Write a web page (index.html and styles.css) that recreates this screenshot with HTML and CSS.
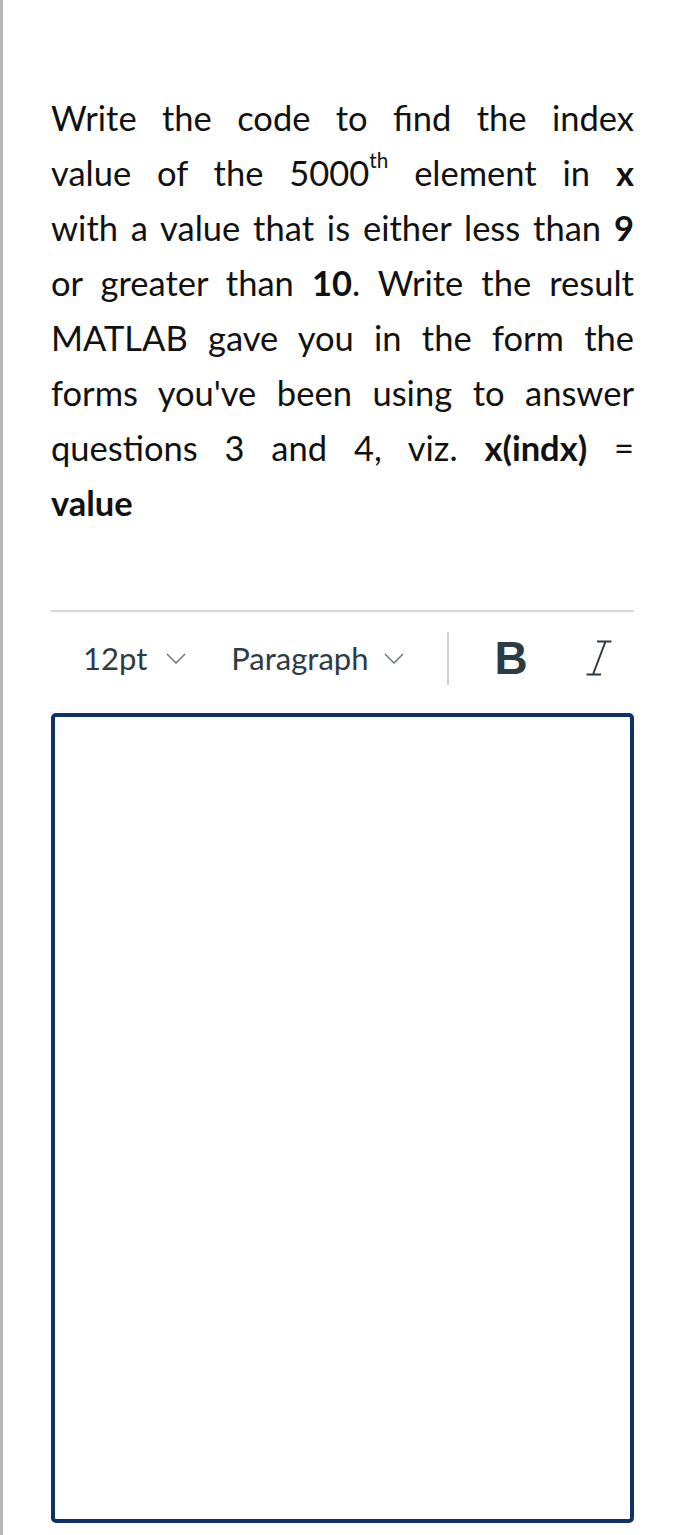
FILE: index.html
```html
<!DOCTYPE html>
<html lang="en">
<head>
<meta charset="utf-8">
<title>Question</title>
<link rel="stylesheet" href="styles.css">
</head>
<body>
<div class="page">
  <p class="question">
    <span class="line">Write the code to find the index</span>
    <span class="line">value of the 5000<sup>th</sup> element in <b>x</b></span>
    <span class="line">with a value that is either less than <b>9</b></span>
    <span class="line">or greater than <b>10</b>. Write the result</span>
    <span class="line">MATLAB gave you in the form the</span>
    <span class="line">forms you've been using to answer</span>
    <span class="line">questions 3 and 4, viz. <b>x(indx)</b> =</span>
    <span class="line last"><b>value</b></span>
  </p>
  <div class="divider"></div>
  <div class="toolbar">
    <div class="menu size">
      <span>12pt</span>
      <svg class="chev" width="20" height="11" viewBox="0 0 20 11"><polyline points="1,1 10,10 19,1" fill="none" stroke="#5f6a72" stroke-width="1.3"/></svg>
    </div>
    <div class="menu block">
      <span>Paragraph</span>
      <svg class="chev" width="20" height="11" viewBox="0 0 20 11"><polyline points="1,1 10,10 19,1" fill="none" stroke="#5f6a72" stroke-width="1.3"/></svg>
    </div>
    <div class="sep"></div>
    <span class="btn bold">B</span>
    <svg class="btn italic" width="28" height="36" viewBox="0 0 28 36"><path d="M12 1.5H26.5M1.5 34.5H16M20.5 1.5L8 34.5" fill="none" stroke="#2d3b45" stroke-width="2"/></svg>
  </div>
  <div class="editor"></div>
</div>
</body>
</html>
```

FILE: styles.css
```css
html, body {
  margin: 0;
  padding: 0;
  background: #fff;
}
body {
  font-family: Lato, "Noto Sans", sans-serif;
  color: #111;
}
.page {
  border-left: 3px solid #b7b7b7;
  min-height: 1535px;
  box-sizing: border-box;
  padding: 90px 40px 0 48px;
}
.question {
  margin: 0;
  font-size: 34.5px;
  line-height: 55px;
}
.line {
  display: block;
  text-align: justify;
  text-align-last: justify;
  white-space: nowrap;
}
.line.last {
  text-align-last: left;
}
.question b {
  font-weight: 700;
}
.question sup {
  font-size: 0.6em;
  line-height: 0;
  vertical-align: 0.85em;
}
.divider {
  margin-top: 80px;
  height: 2px;
  background: #d6d6d6;
}
.toolbar {
  margin-top: 11px;
  height: 70px;
  display: flex;
  align-items: center;
  padding-left: 32px;
  color: #2d3b45;
  font-size: 31px;
}
.menu {
  display: flex;
  align-items: center;
}
.size .chev {
  margin-left: 19px;
}
.size {
  margin-right: 45px;
}
.block .chev {
  margin-left: 16px;
}
.sep {
  width: 2px;
  height: 53px;
  background: #d0d0d0;
  margin-left: 43px;
}
.bold {
  margin-left: 45px;
  font-family: "Liberation Sans", Arial, sans-serif;
  font-weight: 700;
  font-size: 46px;
  line-height: 1;
}
.italic {
  margin-left: 57px;
}
.editor {
  margin-top: 20px;
  height: 810px;
  box-sizing: border-box;
  border: 4px solid #10306a;
  border-radius: 5px;
}
```
